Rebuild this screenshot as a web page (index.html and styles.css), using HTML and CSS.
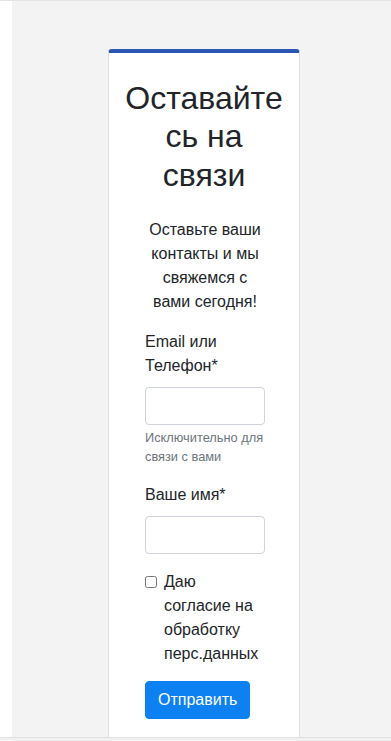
FILE: index.html
```html
<!DOCTYPE html>
<html lang="ru">
<head>
<meta charset="UTF-8" />
<meta name="viewport" content="width=device-width, initial-scale=1" />
<title>Оставайтесь на связи</title>
<link rel="stylesheet" href="styles.css">
</head>
<body>
<div class="frame">
  <div class="side"></div>
  <main class="stage">
    <section class="card">
      <h2 class="card-title">Оставайтесь на связи</h2>
      <div class="card-body">
        <p class="lead">Оставьте ваши контакты и мы свяжемся с вами сегодня!</p>
        <form id="contactForm">
          <div class="form-group">
            <label for="contact">Email или Телефон*</label>
            <input type="text" id="contact" class="form-control" />
            <small class="form-text">Исключительно для связи с вами</small>
          </div>
          <div class="form-group">
            <label for="name">Ваше имя*</label>
            <input type="text" id="name" class="form-control" />
          </div>
          <div class="form-check">
            <input type="checkbox" id="agree" class="check-input" />
            <label for="agree" class="check-label">Даю согласие на обработку перс.данных</label>
          </div>
          <button type="submit" class="btn">Отправить</button>
        </form>
      </div>
    </section>
  </main>
</div>
</body>
</html>
```

FILE: styles.css
```css
html, body { margin: 0; padding: 0; }
body {
  font-family: "Liberation Sans", Arial, sans-serif;
  font-size: 16px; line-height: 1.5; color: #212529; background: #f1f1f1;
}
.frame {
  display: flex; height: 736px; overflow: hidden;
  border-top: 1px solid #e3e3e3; border-bottom: 1px solid #e0e0e0;
}
.side { width: 12px; background: #fff; flex-shrink: 0; }
.stage { flex: 1; background: #f3f3f3; padding-top: 48px; }
.card {
  width: 190px; margin-left: 96px; min-height: 700px; background: #fff;
  border: 1px solid #dedede; border-top: 4px solid #2c56b3; border-radius: 4px 4px 0 0;
}
.card-title {
  margin: 0; padding: 26px 12px 0; text-align: center;
  font-size: 32px; font-weight: 400; line-height: 1.2; overflow-wrap: break-word;
}
.card-body { width: 120px; margin-left: 36px; padding-top: 24px; }
.lead { margin: 0 0 16px; text-align: center; }
.form-group { margin-bottom: 16px; }
label { display: inline-block; margin-bottom: 9px; }
.form-control {
  display: block; width: 100%; height: 38px; box-sizing: border-box; padding: 6px 12px;
  font-size: 16px; border: 1px solid #ced4da; border-radius: 4px; background: #fff;
}
.form-text { display: block; margin-top: 3px; font-size: 12.8px; line-height: 1.5; color: #6c757d; }
.form-check { display: flex; align-items: flex-start; gap: 7px; margin-bottom: 15px; }
.check-input { margin: 6px 0 0; width: 12px; height: 12px; flex-shrink: 0; }
.check-label { margin-bottom: 0; }
.btn {
  padding: 6px 12px; font-family: inherit; font-size: 16px; line-height: 1.5;
  color: #fff; background: #0d80f2; border: 1px solid #0d80f2; border-radius: 4px; cursor: pointer;
}
```
